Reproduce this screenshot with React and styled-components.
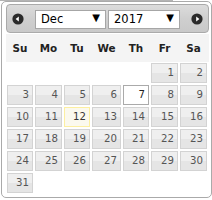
import React from 'react';
import styled, { createGlobalStyle } from 'styled-components';

const Global = createGlobalStyle`
  html, body {
    margin: 0;
    padding: 0;
    background: #fff;
  }
  body {
    font-family: "DejaVu Sans", Verdana, sans-serif;
  }
`;

const Field = styled.div`
  width: 173px;
  height: 1px;
  background: #b4b4b4;
`;

const Picker = styled.div`
  box-sizing: border-box;
  width: 211px;
  height: 197px;
  margin-left: 1px;
  padding: 2px 2px 0 4px;
  border: 1px solid #aaaaaa;
  border-radius: 5px;
  background: #fff;
  color: #222;
`;

const Header = styled.div`
  box-sizing: border-box;
  height: 29px;
  display: flex;
  align-items: center;
  padding-left: 5px;
  border: 1px solid #aaaaaa;
  border-radius: 4px;
  background: linear-gradient(to bottom, #dcdcdc 0%, #cfcfcf 50%, #c9c9c9 100%);
`;

const NavButton = styled.button`
  width: 12px;
  height: 12px;
  padding: 0;
  margin: ${p => (p.$next ? '0 0 0 11px' : '0 11px 0 0')};
  border: 0;
  background: none;
  display: flex;
  cursor: pointer;
`;

const SelectWrap = styled.div`
  position: relative;
  width: ${p => p.$w}px;
  margin-right: ${p => p.$mr || 0}px;
`;

const Select = styled.select`
  appearance: none;
  -webkit-appearance: none;
  box-sizing: border-box;
  width: 100%;
  height: 19px;
  margin: 0;
  padding: 0 0 0 5px;
  border: 1px solid #a6a6a6;
  border-radius: 0;
  background: #fff;
  color: #000;
  font-family: "DejaVu Sans", Verdana, sans-serif;
  font-size: 11.5px;
  line-height: 17px;
  outline: none;
`;

const Arrow = styled.span`
  position: absolute;
  right: 6px;
  top: 5px;
  font-family: "DejaVu Sans", sans-serif;
  font-size: 10px;
  line-height: 9px;
  color: #000;
  pointer-events: none;
`;

const DayNames = styled.div`
  height: 28px;
  margin-top: 1px;
  background: #f4f4f4;
  display: grid;
  grid-template-columns: 26px 27px 26px 29px 26px 27px 27px;
  column-gap: 2px;
  padding-left: 1px;
  align-items: center;
`;

const DayName = styled.span`
  text-align: center;
  font-weight: bold;
  font-size: 10.4px;
  color: #222;
`;

const Days = styled.div`
  display: grid;
  grid-template-columns: 26px 27px 26px 29px 26px 27px 27px;
  grid-auto-rows: 20px;
  gap: 2px;
  margin: 1px 0 0 1px;
`;

const Day = styled.a`
  box-sizing: border-box;
  display: block;
  padding-right: 3px;
  text-align: right;
  font-size: 10.2px;
  line-height: 18px;
  text-decoration: none;
  cursor: pointer;
  border: 1px solid ${p => (p.$active ? '#aaaaaa' : p.$today ? '#fcefa1' : '#d3d3d3')};
  color: ${p => (p.$active ? '#212121' : p.$today ? '#363636' : '#555555')};
  background: ${p =>
    p.$active
      ? '#ffffff'
      : p.$today
      ? '#fbf9ee'
      : 'linear-gradient(to bottom, #efefef 0%, #efefef 50%, #e5e5e5 50%, #e5e5e5 100%)'};
`;

const Blank = styled.span``;

const NavIcon = ({ dir }) => (
  <svg width="12" height="12" viewBox="0 0 12 12">
    <circle cx="6" cy="6" r="5.6" fill="#2a2a2a" />
    {dir === 'prev' ? (
      <polygon points="3.6,6 6.8,3.4 6.8,8.6" fill="#fff" />
    ) : (
      <polygon points="8.4,6 5.2,3.4 5.2,8.6" fill="#fff" />
    )}
  </svg>
);

const names = ['Su', 'Mo', 'Tu', 'We', 'Th', 'Fr', 'Sa'];
const months = ['Jan', 'Feb', 'Mar', 'Apr', 'May', 'Jun', 'Jul', 'Aug', 'Sep', 'Oct', 'Nov', 'Dec'];

const App = () => {
  const lead = 5;
  const days = Array.from({ length: 31 }, (_, i) => i + 1);
  return (
    <>
      <Global />
      <Field />
      <Picker>
        <Header>
          <NavButton aria-label="Prev">
            <NavIcon dir="prev" />
          </NavButton>
          <SelectWrap $w={71} $mr={2}>
            <Select defaultValue="Dec">
              {months.map(m => (
                <option key={m}>{m}</option>
              ))}
            </Select>
            <Arrow>▼</Arrow>
          </SelectWrap>
          <SelectWrap $w={72}>
            <Select defaultValue="2017">
              {[2015, 2016, 2017, 2018, 2019].map(y => (
                <option key={y}>{y}</option>
              ))}
            </Select>
            <Arrow>▼</Arrow>
          </SelectWrap>
          <NavButton $next aria-label="Next">
            <NavIcon dir="next" />
          </NavButton>
        </Header>
        <DayNames>
          {names.map(n => (
            <DayName key={n}>{n}</DayName>
          ))}
        </DayNames>
        <Days>
          {Array.from({ length: lead }, (_, i) => (
            <Blank key={'b' + i} />
          ))}
          {days.map(d => (
            <Day key={d} $today={d === 12} $active={d === 7}>
              {d}
            </Day>
          ))}
        </Days>
      </Picker>
    </>
  );
};

export default App;
